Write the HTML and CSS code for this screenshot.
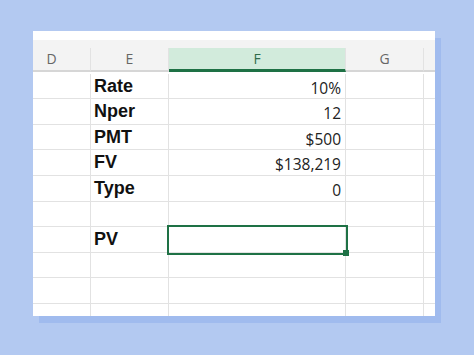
FILE: index.html
```html
<!DOCTYPE html>
<html lang="en">
<head>
  <meta charset="UTF-8" />
  <title>PV</title>
  <link rel="stylesheet" href="styles.css">
</head>
<body>
  <div class="sheet">
    <div class="band"></div>
    <div class="grid">
      <div class="head">D</div>
      <div class="head">E</div>
      <div class="head active">F</div>
      <div class="head">G</div>
      <div class="head"></div>

      <div class="cell"></div><div class="cell label">Rate</div><div class="cell num">10%</div><div class="cell"></div><div class="cell"></div>
      <div class="cell"></div><div class="cell label">Nper</div><div class="cell num">12</div><div class="cell"></div><div class="cell"></div>
      <div class="cell"></div><div class="cell label">PMT</div><div class="cell num">$500</div><div class="cell"></div><div class="cell"></div>
      <div class="cell"></div><div class="cell label">FV</div><div class="cell num">$138,219</div><div class="cell"></div><div class="cell"></div>
      <div class="cell"></div><div class="cell label">Type</div><div class="cell num">0</div><div class="cell"></div><div class="cell"></div>
      <div class="cell"></div><div class="cell label"></div><div class="cell num"></div><div class="cell"></div><div class="cell"></div>
      <div class="cell"></div><div class="cell label">PV</div><div class="cell num selected"></div><div class="cell"></div><div class="cell"></div>
      <div class="cell"></div><div class="cell"></div><div class="cell"></div><div class="cell"></div><div class="cell"></div>
      <div class="cell"></div><div class="cell"></div><div class="cell"></div><div class="cell"></div><div class="cell"></div>
      <div class="cell"></div><div class="cell"></div><div class="cell"></div><div class="cell"></div><div class="cell"></div>
    </div>
  </div>
</body>
</html>
```

FILE: styles.css
```css
* {
  box-sizing: border-box;
  margin: 0;
  padding: 0;
}

body {
  background-color: #b3c9f1;
  padding: 31px 0 0 33px;
  height: 355px;
  overflow: hidden;
}

.sheet {
  width: 402px;
  height: 285px;
  background: #fff;
  box-shadow: 6px 7px 0 #a0bbee;
  overflow: hidden;
  padding-top: 9px;
}

.band {
  height: 8px;
  background: #f3f3f3;
}

.grid {
  display: grid;
  grid-template-columns: 78px 78px 177px 78px 78px;
  grid-auto-rows: 25.6px;
  margin-left: -20px;
}

.head {
  height: 24px;
  background: #f3f3f3;
  border-right: 1px solid #e2e2e2;
  border-bottom: 2px solid #d6d6d6;
  font-family: "Open Sans", sans-serif;
  font-size: 14px;
  line-height: 22px;
  color: #666;
  text-align: center;
}

.head.active {
  background: #d2ebdc;
  border-bottom: 3px solid #1e7145;
  color: #2f6b4a;
}

.cell {
  border-right: 1px solid #e2e2e2;
  border-bottom: 1px solid #e2e2e2;
  position: relative;
}

.label {
  font-family: "Liberation Sans", Arial, sans-serif;
  font-weight: bold;
  font-size: 18px;
  line-height: 25px;
  color: #111;
  padding-left: 3px;
}

.num {
  font-family: "Open Sans", sans-serif;
  font-size: 15.5px;
  line-height: 25px;
  padding-top: 2px;
  color: #222;
  text-align: right;
  padding-right: 4px;
}

.selected {
  outline: 2px solid #1e7145;
  outline-offset: 0;
  z-index: 1;
}

.selected::after {
  content: "";
  position: absolute;
  right: -4px;
  bottom: -4px;
  width: 6px;
  height: 6px;
  background: #1e7145;
}
```
